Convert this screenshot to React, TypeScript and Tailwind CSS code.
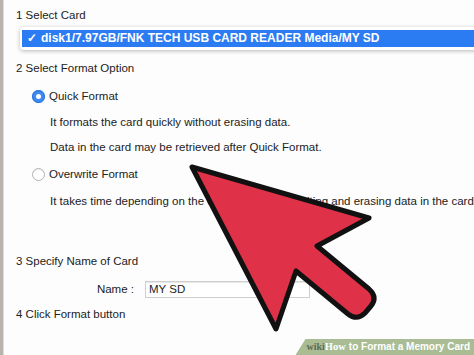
import React from 'react';

function Radio({ checked }: { checked: boolean }) {
  if (checked) {
    return (
      <span className="flex h-[13px] w-[13px] shrink-0 items-center justify-center rounded-full bg-[#3d8bf0] shadow-[inset_0_0_0_1px_#2a72d8]">
        <span className="h-[5px] w-[5px] rounded-full bg-white" />
      </span>
    );
  }
  return (
    <span className="h-[13px] w-[13px] shrink-0 rounded-full border border-[#b4b4b4] bg-white shadow-[inset_0_1px_1px_rgba(0,0,0,0.08)]" />
  );
}

function Arrow() {
  return (
    <svg className="pointer-events-none absolute left-0 top-0" width="474" height="355" viewBox="0 0 474 355">
      <path
        d="M192 167 L369 218 L317 246 L369 289 Q378 297 371 306 L365 313 Q357 321 348 314 L296 271 L276 329 Z"
        fill="#df3147"
        stroke="#111"
        strokeWidth="5"
        strokeLinejoin="round"
      />
    </svg>
  );
}

export default function App() {
  return (
    <div
      className="relative h-[355px] w-[474px] overflow-hidden bg-[#fdfdfd] text-[11.5px] text-[#222]"
      style={{ fontFamily: '"Liberation Sans", Arial, sans-serif' }}
    >
      <div className="absolute inset-y-0 left-0 flex">
        <div className="w-[3px] bg-[#b8b3ad]" />
        <div className="w-[1px] bg-[#dedbd7]" />
      </div>

      <div className="flex flex-col pl-[16px] pt-[8px]">
        <div className="h-[14px] leading-[14px]">1 Select Card</div>

        <div className="-mr-[20px] ml-[4px] mt-[5px] h-[23px] rounded-l-[4px] bg-white py-[3px] pl-[2px] shadow-[0_1px_4px_rgba(0,0,0,0.28)]">
          <div className="flex h-[17px] items-center bg-[#2b7cf2] pl-[5px] text-[12px] font-bold leading-[17px] text-white">
            <span className="w-[14px]">✓</span>
            <span>disk1/7.97GB/FNK TECH USB CARD READER Media/MY SD</span>
          </div>
        </div>

        <div className="mt-[11px] h-[14px] leading-[14px]">2 Select Format Option</div>

        <div className="ml-[16px] mt-[14px] flex h-[14px] items-center gap-[4px] leading-[14px]">
          <Radio checked />
          <span>Quick Format</span>
        </div>
        <div className="ml-[34px] mt-[12px] h-[14px] leading-[14px]">
          It formats the card quickly without erasing data.
        </div>
        <div className="ml-[34px] mt-[11px] h-[14px] leading-[14px]">
          Data in the card may be retrieved after Quick Format.
        </div>

        <div className="ml-[16px] mt-[13px] flex h-[14px] items-center gap-[4px] leading-[14px]">
          <Radio checked={false} />
          <span>Overwrite Format</span>
        </div>
        <div className="ml-[34px] mt-[13px] h-[14px] whitespace-nowrap leading-[14px]">
          It takes time depending on the card capacity for writing and erasing data in the card.
        </div>

        <div className="mt-[46px] h-[14px] leading-[14px]">3 Specify Name of Card</div>

        <div className="mt-[13px] flex h-[17px] items-center">
          <div className="w-[118px] text-right leading-[17px]">Name :</div>
          <div className="ml-[11px] flex h-[17px] w-[165px] items-center border border-[#cfcfcf] bg-white pl-[3px] leading-[17px] shadow-[inset_0_1px_1px_rgba(0,0,0,0.1)]">
            MY SD
          </div>
        </div>

        <div className="mt-[9px] h-[14px] leading-[14px]">4 Click Format button</div>
      </div>

      <Arrow />

      <div className="absolute bottom-0 right-0 flex h-[16px] items-center whitespace-nowrap bg-[#a9bc93] pl-[11px] pr-[4px] text-[10px] font-bold leading-[16px] text-white [clip-path:polygon(10px_0,100%_0,100%_100%,0_100%)]">
        <span className="text-[#5f6b55]" style={{ fontFamily: '"Liberation Serif", serif' }}>wiki</span>
        <span className="text-[10.5px]" style={{ fontFamily: '"Liberation Serif", serif' }}>How</span>
        <span className="ml-[3px]">to Format a Memory Card</span>
      </div>
    </div>
  );
}
